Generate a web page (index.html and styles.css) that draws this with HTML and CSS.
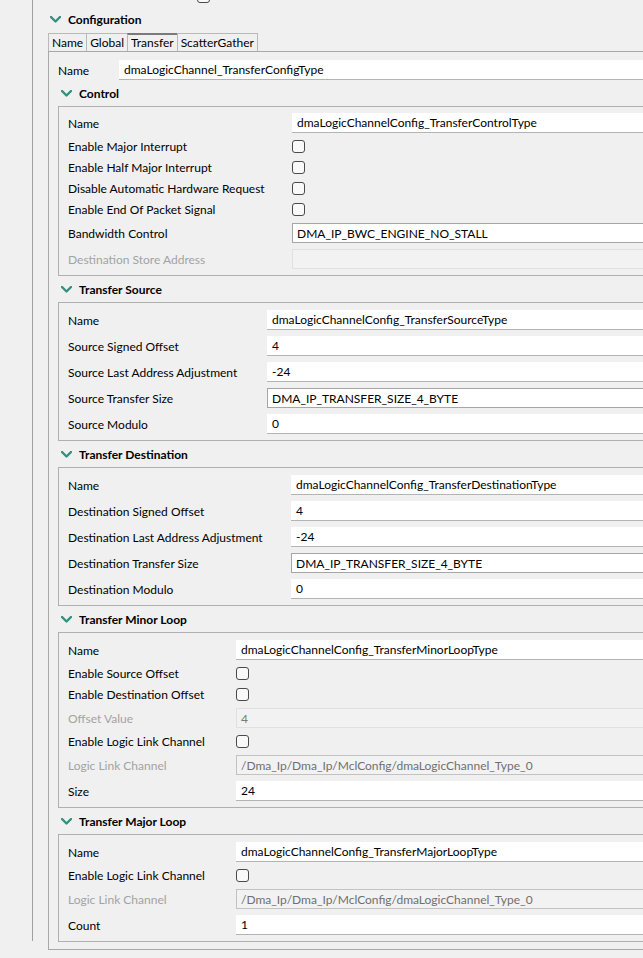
FILE: index.html
```html
<!DOCTYPE html>
<html>
<head>
<meta charset="utf-8">
<link rel="stylesheet" href="styles.css">
</head>
<body>
<div class="rail">
  <div class="clipped-row">
    <span class="lbl dis">Enable Scatter/Gather</span>
    <span class="cb"></span>
  </div>
  <div class="section-head">
    <svg class="chev" viewBox="0 0 11 7"><polyline points="1,1 5.5,5.5 10,1"/></svg>
    <span>Configuration</span>
  </div>
  <div class="tabs">
    <div class="tab">Name</div>
    <div class="tab">Global</div>
    <div class="tab sel">Transfer</div>
    <div class="tab">ScatterGather</div>
  </div>
  <div class="panel">
    <div class="form f-top">
      <span class="lbl">Name</span><div class="field">dmaLogicChannel_TransferConfigType</div>
    </div>

    <div class="group-head">
      <svg class="chev" viewBox="0 0 11 7"><polyline points="1,1 5.5,5.5 10,1"/></svg>
      <span>Control</span>
    </div>
    <div class="box form f-control">
      <span class="lbl">Name</span><div class="field">dmaLogicChannelConfig_TransferControlType</div>
      <span class="lbl chk-row">Enable Major Interrupt</span><span class="cb"></span>
      <span class="lbl chk-row">Enable Half Major Interrupt</span><span class="cb"></span>
      <span class="lbl chk-row">Disable Automatic Hardware Request</span><span class="cb"></span>
      <span class="lbl chk-row">Enable End Of Packet Signal</span><span class="cb"></span>
      <span class="lbl">Bandwidth Control</span><div class="field combo">DMA_IP_BWC_ENGINE_NO_STALL</div>
      <span class="lbl dis">Destination Store Address</span><div class="field disabled"></div>
    </div>

    <div class="group-head">
      <svg class="chev" viewBox="0 0 11 7"><polyline points="1,1 5.5,5.5 10,1"/></svg>
      <span>Transfer Source</span>
    </div>
    <div class="box form f-source">
      <span class="lbl">Name</span><div class="field">dmaLogicChannelConfig_TransferSourceType</div>
      <span class="lbl">Source Signed Offset</span><div class="field">4</div>
      <span class="lbl">Source Last Address Adjustment</span><div class="field">-24</div>
      <span class="lbl">Source Transfer Size</span><div class="field combo">DMA_IP_TRANSFER_SIZE_4_BYTE</div>
      <span class="lbl">Source Modulo</span><div class="field">0</div>
    </div>

    <div class="group-head">
      <svg class="chev" viewBox="0 0 11 7"><polyline points="1,1 5.5,5.5 10,1"/></svg>
      <span>Transfer Destination</span>
    </div>
    <div class="box form f-dest">
      <span class="lbl">Name</span><div class="field">dmaLogicChannelConfig_TransferDestinationType</div>
      <span class="lbl">Destination Signed Offset</span><div class="field">4</div>
      <span class="lbl">Destination Last Address Adjustment</span><div class="field">-24</div>
      <span class="lbl">Destination Transfer Size</span><div class="field combo">DMA_IP_TRANSFER_SIZE_4_BYTE</div>
      <span class="lbl">Destination Modulo</span><div class="field">0</div>
    </div>

    <div class="group-head">
      <svg class="chev" viewBox="0 0 11 7"><polyline points="1,1 5.5,5.5 10,1"/></svg>
      <span>Transfer Minor Loop</span>
    </div>
    <div class="box form f-minor">
      <span class="lbl">Name</span><div class="field">dmaLogicChannelConfig_TransferMinorLoopType</div>
      <span class="lbl chk-row">Enable Source Offset</span><span class="cb"></span>
      <span class="lbl chk-row">Enable Destination Offset</span><span class="cb"></span>
      <span class="lbl dis">Offset Value</span><div class="field disabled">4</div>
      <span class="lbl chk-row">Enable Logic Link Channel</span><span class="cb"></span>
      <span class="lbl dis">Logic Link Channel</span><div class="field disabled ref">/Dma_Ip/Dma_Ip/MclConfig/dmaLogicChannel_Type_0</div>
      <span class="lbl">Size</span><div class="field">24</div>
    </div>

    <div class="group-head">
      <svg class="chev" viewBox="0 0 11 7"><polyline points="1,1 5.5,5.5 10,1"/></svg>
      <span>Transfer Major Loop</span>
    </div>
    <div class="box form f-major">
      <span class="lbl">Name</span><div class="field">dmaLogicChannelConfig_TransferMajorLoopType</div>
      <span class="lbl chk-row">Enable Logic Link Channel</span><span class="cb"></span>
      <span class="lbl dis">Logic Link Channel</span><div class="field disabled ref">/Dma_Ip/Dma_Ip/MclConfig/dmaLogicChannel_Type_0</div>
      <span class="lbl">Count</span><div class="field">1</div>
    </div>
  </div>
</div>
</body>
</html>
```

FILE: styles.css
```css
html, body {
  margin: 0;
  padding: 0;
}
body {
  background: #f0f0f0;
  font-family: Lato, "Open Sans", sans-serif;
  font-size: 12px;
  color: #000;
  width: 643px;
  height: 958px;
  overflow: hidden;
}
.rail {
  margin-left: 32px;
  border-left: 1px solid #a0a0a0;
  height: 955px;
  width: 740px;
  padding-left: 15px;
  box-sizing: border-box;
}
.clipped-row {
  height: 20px;
  margin-top: -14px;
  display: grid;
  grid-template-columns: 149px 13px;
  align-items: center;
}
.clipped-row .lbl {
  margin-top: -2px;
}
.lbl {
  white-space: nowrap;
  line-height: 15px;
}
.lbl.dis {
  color: #a3a3a3;
}
.cb {
  display: block;
  width: 13px;
  height: 13px;
  box-sizing: border-box;
  border: 1px solid #4a4a4a;
  border-radius: 3px;
  background: #f9f9f9;
}
.section-head, .group-head {
  height: 26px;
  display: flex;
  align-items: center;
  gap: 7px;
  font-weight: bold;
  padding-left: 2px;
}
.group-head {
  padding-left: 3px;
}
.chev {
  width: 11px;
  height: 7px;
  fill: none;
  stroke: #34907f;
  stroke-width: 2.4;
  stroke-linecap: round;
  stroke-linejoin: round;
}
.tabs {
  margin-top: 1px;
  height: 18px;
  display: flex;
}
.tab {
  box-sizing: border-box;
  height: 18px;
  padding: 0 3px;
  border: 1px solid #b9b9b9;
  border-bottom: none;
  border-right: none;
  line-height: 17px;
}
.tab:last-child {
  border-right: 1px solid #b9b9b9;
}
.tab.sel {
  border-top: 2px solid #7a7a7a;
  line-height: 16px;
}
.panel {
  border: 1px solid #a8a8a8;
  padding: 8px 0 7px 9px;
  box-sizing: border-box;
}
.form {
  display: grid;
  align-items: center;
  row-gap: 6px;
}
.f-top { grid-template-columns: 61px 1fr; }
.f-control { grid-template-columns: 224px 1fr; }
.f-source { grid-template-columns: 199px 1fr; }
.f-dest { grid-template-columns: 223px 1fr; }
.f-minor { grid-template-columns: 168px 1fr; }
.f-major { grid-template-columns: 168px 1fr; }
.box {
  border: 1px solid #b0b0b0;
  padding: 7px 0 6px 9px;
}
.box.f-control {
  padding-top: 6px;
}
.field {
  height: 20px;
  box-sizing: border-box;
  background: #fff;
  border-bottom: 1px solid #b4b4b4;
  padding: 0 5px;
  display: flex;
  align-items: center;
  white-space: nowrap;
  overflow: hidden;
}
.field.combo {
  border: 1px solid #a6a6a6;
  padding-left: 4px;
}
.field.disabled {
  background: #f2f2f2;
  border: 1px solid #e0e0e0;
  color: #7a7a7a;
  padding-left: 4px;
}
.field.disabled.ref {
  border-color: #c2c2c2;
  color: #6f6f6f;
}
.chk-row {
  line-height: 15px;
}
```
